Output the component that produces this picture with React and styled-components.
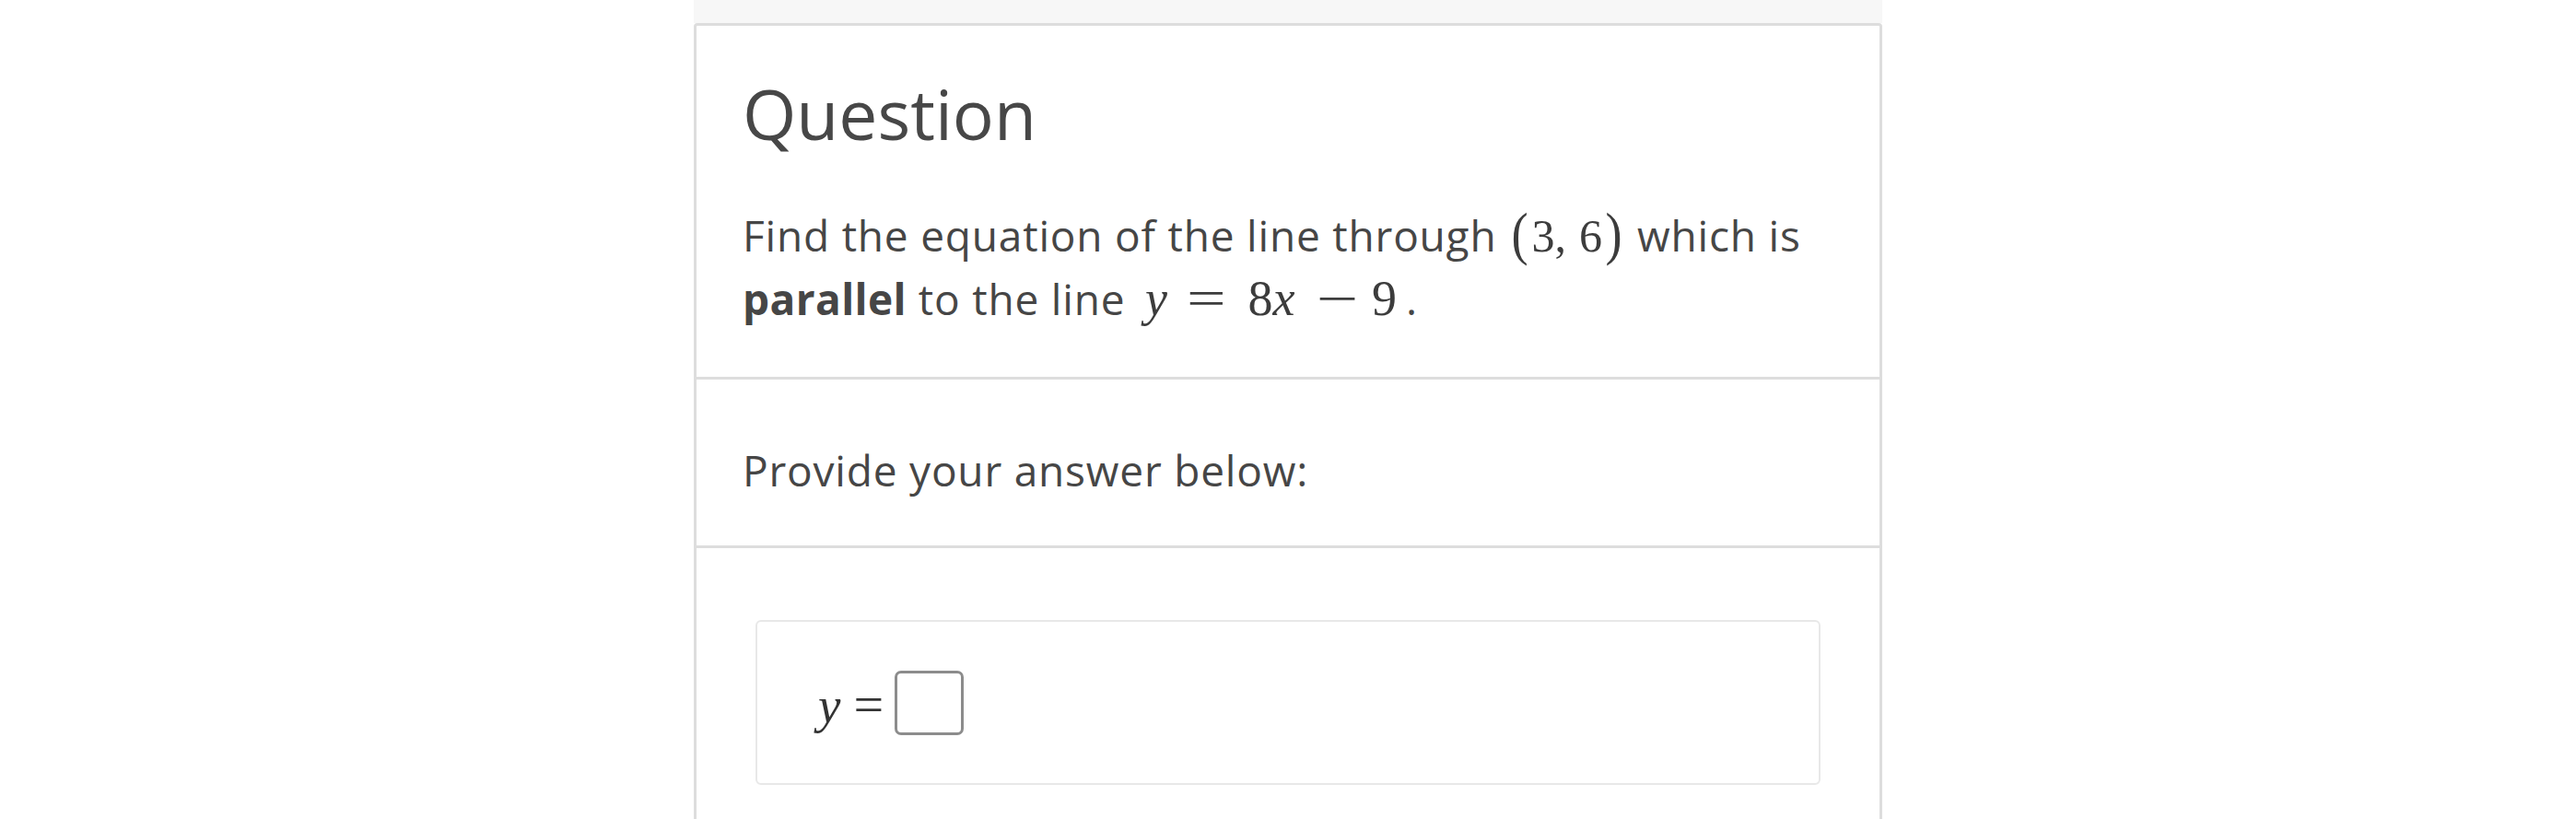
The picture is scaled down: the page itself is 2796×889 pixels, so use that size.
import styled, { createGlobalStyle } from "styled-components";

const GlobalStyle = createGlobalStyle`
  html, body {
    margin: 0;
    padding: 0;
    background: #fff;
  }
  body {
    font-family: "Open Sans", "Noto Sans", sans-serif;
    color: #464646;
  }
`;

function App() {
  return (
    <Page>
      <GlobalStyle />
      <Column>
        <TopStrip />
        <Card>
          <Section>
            <Title>Question</Title>
            <Text>
              Find the equation of the line through{" "}
              <MathInline>
                <Paren>(</Paren>3,<Thin />6<Paren>)</Paren>
              </MathInline>{" "}
              which is <Strong>parallel</Strong> to the line{" "}
              <MathInline $size={54} $shift={9}>
                <Var>y</Var>
                <Op $scale={1.4} $left={27} $right={30}>=</Op>8<Var>x</Var>
                <Op $scale={1.5} $left={31} $right={22}>−</Op>9
              </MathInline>
              <Period>.</Period>
            </Text>
          </Section>

          <Section $top={64} $bottom={47}>
            <Text>Provide your answer below:</Text>
          </Section>

          <AnswerSection>
            <AnswerBox>
              <AnswerMath>
                <Var>y</Var>
                <AnswerEq>=</AnswerEq>
              </AnswerMath>
              <BlankInput aria-label="answer" />
            </AnswerBox>
          </AnswerSection>
        </Card>
      </Column>
    </Page>
  );
}

const Page = styled.div`
  display: flex;
  justify-content: center;
  align-items: flex-start;
  width: 100%;
  height: 889px;
  overflow: hidden;
`;

const Column = styled.div`
  width: 1290px;
  flex-shrink: 0;
`;

const TopStrip = styled.div`
  height: 25px;
  background-color: #f7f7f7;
`;

const Card = styled.div`
  border: 3px solid #dddddd;
  border-radius: 4px 4px 0 0;
  background: #fff;
  min-height: 1000px;
`;

const Section = styled.div`
  padding: ${(p) => p.$top ?? 50}px 50px ${(p) => p.$bottom ?? 50}px;
  border-bottom: 3px solid #dddddd;
`;

const Title = styled.h2`
  margin: 0 0 53px;
  font-size: 75px;
  line-height: 90px;
  font-weight: 400;
  color: #474747;
`;

const Text = styled.p`
  margin: 0;
  font-size: 46px;
  line-height: 69px;
  letter-spacing: 0.8px;
  font-weight: 400;
`;

const Strong = styled.strong`
  font-weight: 700;
  letter-spacing: 0.4px;
`;

const MathInline = styled.span`
  font-family: "Liberation Serif", "DejaVu Serif", serif;
  font-size: ${(p) => p.$size ?? 50}px;
  margin-left: ${(p) => p.$shift ?? 0}px;
  line-height: 0;
  letter-spacing: 0;
  color: #3c3c3c;
`;

const Paren = styled.span`
  display: inline-block;
  font-size: 64px;
  line-height: 0;
  transform: scaleX(0.85) translateY(2px);
  margin: 0 2px;
`;

const Thin = styled.span`
  display: inline-block;
  width: 14px;
`;

const Var = styled.i`
  font-style: italic;
`;

const Op = styled.span`
  display: inline-block;
  line-height: 0;
  transform: scaleX(${(p) => p.$scale});
  margin: 0 ${(p) => p.$right}px 0 ${(p) => p.$left}px;
`;

const Period = styled.span`
  margin-left: 10px;
`;

const AnswerSection = styled.div`
  padding: 78px 64px 0;
`;

const AnswerBox = styled.div`
  height: 175px;
  border: 2px solid #e8e8e8;
  border-radius: 6px;
  display: flex;
  align-items: center;
  padding-left: 66px;
`;

const AnswerMath = styled.span`
  font-family: "Liberation Serif", "DejaVu Serif", serif;
  font-size: 55px;
  color: #333;
  display: flex;
  align-items: baseline;
  margin-top: 4px;
`;

const AnswerEq = styled.span`
  margin: 0 12px 0 14px;
  font-size: 58px;
`;

const BlankInput = styled.input`
  width: 75px;
  height: 70px;
  box-sizing: border-box;
  border: 3px solid #8c8c8c;
  border-radius: 7px;
  background: #fff;
  padding: 0;
  outline: none;
`;

export default App;
